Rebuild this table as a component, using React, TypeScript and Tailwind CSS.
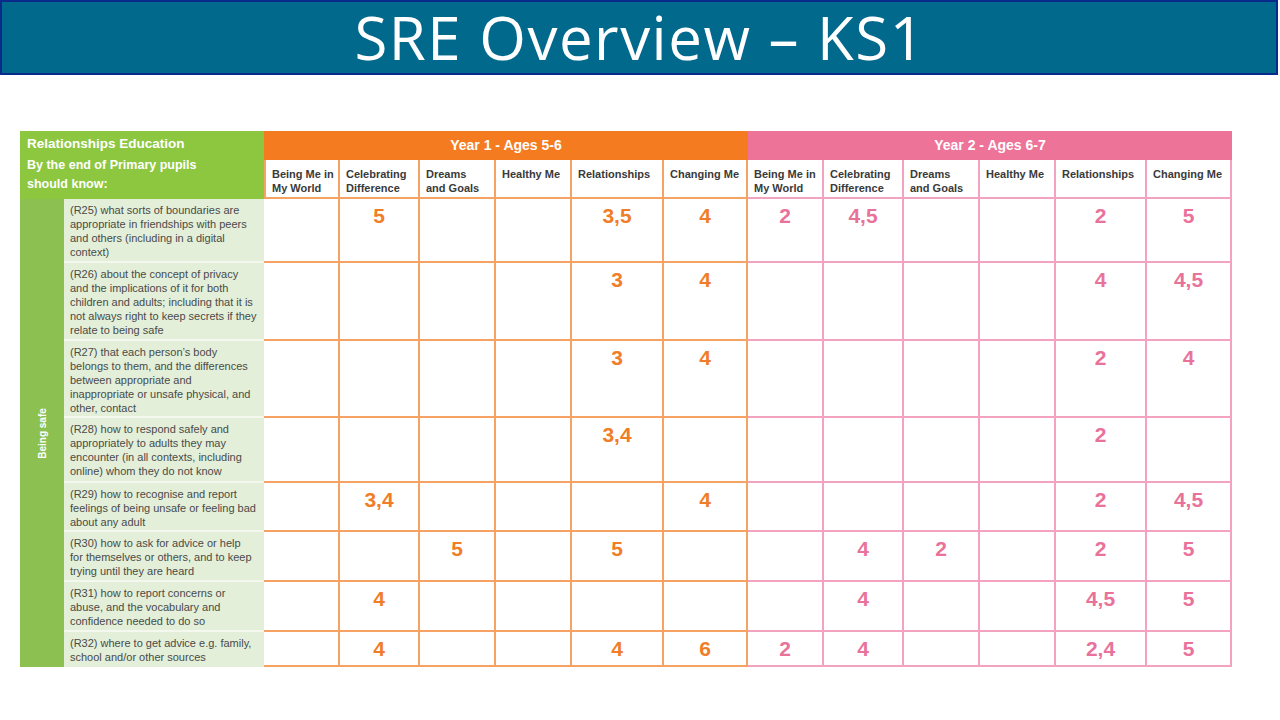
import React from 'react';

const topics = [
  ['Being Me in', 'My World'],
  ['Celebrating', 'Difference'],
  ['Dreams', 'and Goals'],
  ['Healthy Me'],
  ['Relationships'],
  ['Changing Me'],
];

const colWidths = '44px 200px 76px 80px 76px 76px 92px 84px 76px 80px 76px 76px 91px 85px';

type Row = { lines: string[]; h: number; y1: string[]; y2: string[] };

const rows: Row[] = [
  {
    lines: ['(R25) what sorts of boundaries are', 'appropriate in friendships with peers', 'and others (including in a digital', 'context)'],
    h: 64,
    y1: ['', '5', '', '', '3,5', '4'],
    y2: ['2', '4,5', '', '', '2', '5'],
  },
  {
    lines: ['(R26) about the concept of privacy', 'and the implications of it for both', 'children and adults; including that it is', 'not always right to keep secrets if they', 'relate to being safe'],
    h: 78,
    y1: ['', '', '', '', '3', '4'],
    y2: ['', '', '', '', '4', '4,5'],
  },
  {
    lines: ['(R27) that each person\u2019s body', 'belongs to them, and the differences', 'between appropriate and', 'inappropriate or unsafe physical, and', 'other, contact'],
    h: 77,
    y1: ['', '', '', '', '3', '4'],
    y2: ['', '', '', '', '2', '4'],
  },
  {
    lines: ['(R28) how to respond safely and', 'appropriately to adults they may', 'encounter (in all contexts, including', 'online) whom they do not know'],
    h: 65,
    y1: ['', '', '', '', '3,4', ''],
    y2: ['', '', '', '', '2', ''],
  },
  {
    lines: ['(R29) how to recognise and report', 'feelings of being unsafe or feeling bad', 'about any adult'],
    h: 49,
    y1: ['', '3,4', '', '', '', '4'],
    y2: ['', '', '', '', '2', '4,5'],
  },
  {
    lines: ['(R30) how to ask for advice or help', 'for themselves or others, and to keep', 'trying until they are heard'],
    h: 50,
    y1: ['', '', '5', '', '5', ''],
    y2: ['', '4', '2', '', '2', '5'],
  },
  {
    lines: ['(R31) how to report concerns or', 'abuse, and the vocabulary and', 'confidence needed to do so'],
    h: 50,
    y1: ['', '4', '', '', '', ''],
    y2: ['', '4', '', '', '4,5', '5'],
  },
  {
    lines: ['(R32) where to get advice e.g. family,', 'school and/or other sources'],
    h: 35,
    y1: ['', '4', '', '', '4', '6'],
    y2: ['2', '4', '', '', '2,4', '5'],
  },
];

function NumCell({ v, pink }: { v: string; pink: boolean }) {
  return (
    <div
      className={
        'border-b-2 border-r-2 text-center pt-[6px] text-[21px] leading-[22px] font-bold ' +
        (pink ? 'border-[#f3a3c0] text-[#e9729b]' : 'border-[#f5a262] text-[#f07d28]')
      }
    >
      {v}
    </div>
  );
}

export default function App() {
  return (
    <div className="w-[1280px] h-[720px] bg-white overflow-hidden font-['Liberation_Sans',Arial,sans-serif]">
      <div className="w-[1278px] h-[75px] bg-[#00698c] border-2 border-[#0a2a8c] flex items-center justify-center">
        <h1 className="text-white text-[60px] leading-[70px] tracking-[1.5px] font-['Open_Sans',sans-serif] -mt-[2px] ml-[2px] whitespace-nowrap">
          SRE Overview – KS1
        </h1>
      </div>

      <div
        className="grid mt-[56px] ml-[20px] w-[1212px]"
        style={{ gridTemplateColumns: colWidths, gridTemplateRows: `29px 39px ${rows.map((r) => r.h + 'px').join(' ')}` }}
      >
        <div className="col-span-2 row-span-2 bg-[#8dc63f] text-white font-bold px-[7px] pt-[4px]">
          <div className="text-[13.5px] leading-[18px]">Relationships Education</div>
          <div className="text-[12.5px] leading-[19px] mt-[3px]">
            By the end of Primary pupils
            <br />
            should know:
          </div>
        </div>
        <div className="col-span-6 bg-[#f47b20] text-white font-bold text-[14px] flex items-center justify-center">
          Year 1 - Ages 5-6
        </div>
        <div className="col-span-6 bg-[#ee7399] text-white font-bold text-[14px] flex items-center justify-center">
          Year 2 - Ages 6-7
        </div>

        {[0, 1].map((y) =>
          topics.map((t, i) => (
            <div
              key={`h${y}${i}`}
              className={
                'border-r-2 border-b-2 px-[6px] pt-[7px] text-[11px] leading-[14px] font-bold text-[#3a3a3a] whitespace-nowrap ' +
                (y === 0 ? 'border-[#f5a262] ' : 'border-[#f3a3c0] ') +
                (y === 0 && i === 0 ? 'border-l-2 border-l-[#f5a262]' : '')
              }
            >
              {t.map((l) => (
                <div key={l}>{l}</div>
              ))}
            </div>
          ))
        )}

        <div className="row-span-8 bg-[#8cc152] flex items-center justify-center">
          <span className="-rotate-90 text-white text-[10px] font-bold whitespace-nowrap">Being safe</span>
        </div>

        {rows.map((r, ri) => (
          <React.Fragment key={ri}>
            <div className={'bg-[#e3efd8] px-[6px] pt-[4px] text-[11px] leading-[14px] text-[#4a4a4a] whitespace-nowrap ' + (ri < rows.length - 1 ? 'border-b-2 border-[#f4f8ef]' : '')}>
              {r.lines.map((l, li) => (
                <div key={li}>{l}</div>
              ))}
            </div>
            {r.y1.map((v, i) => (
              <NumCell key={'a' + i} v={v} pink={false} />
            ))}
            {r.y2.map((v, i) => (
              <NumCell key={'b' + i} v={v} pink={true} />
            ))}
          </React.Fragment>
        ))}
      </div>
    </div>
  );
}
